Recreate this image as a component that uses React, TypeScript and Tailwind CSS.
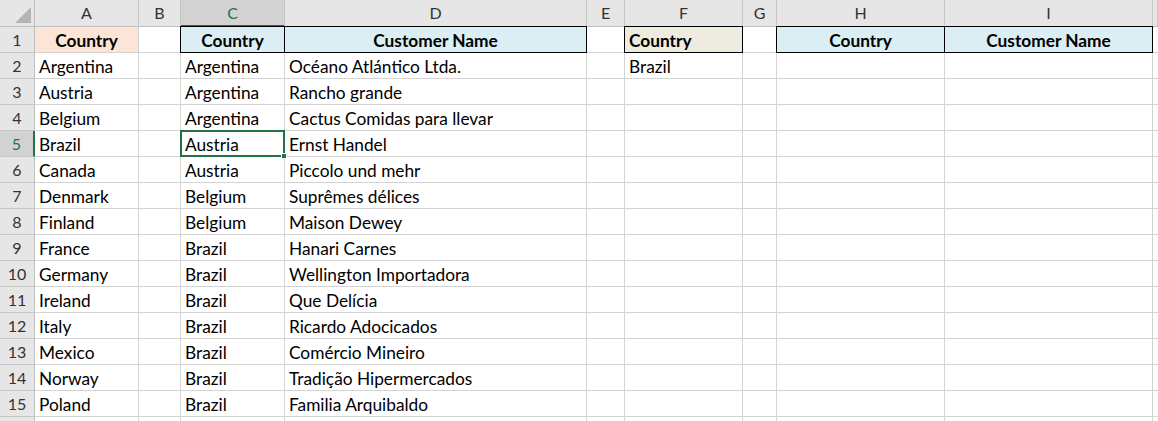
import React from 'react';

type Fill = 'orange' | 'blue' | 'tan' | undefined;

interface Cell {
  text?: string;
  bold?: boolean;
  center?: boolean;
  fill?: Fill;
  boxed?: boolean;
  selected?: boolean;
}

const columns = [
  { key: 'A', width: 104 },
  { key: 'B', width: 42 },
  { key: 'C', width: 104 },
  { key: 'D', width: 302 },
  { key: 'E', width: 38 },
  { key: 'F', width: 118 },
  { key: 'G', width: 34 },
  { key: 'H', width: 168 },
  { key: 'I', width: 208 },
  { key: '', width: 5 },
];

const countries = ['Argentina', 'Austria', 'Belgium', 'Brazil', 'Canada', 'Denmark', 'Finland', 'France', 'Germany', 'Ireland', 'Italy', 'Mexico', 'Norway', 'Poland'];
const custCountry = ['Argentina', 'Argentina', 'Argentina', 'Austria', 'Austria', 'Belgium', 'Belgium', 'Brazil', 'Brazil', 'Brazil', 'Brazil', 'Brazil', 'Brazil', 'Brazil'];
const custName = [
  'Océano Atlántico Ltda.',
  'Rancho grande',
  'Cactus Comidas para llevar',
  'Ernst Handel',
  'Piccolo und mehr',
  'Suprêmes délices',
  'Maison Dewey',
  'Hanari Carnes',
  'Wellington Importadora',
  'Que Delícia',
  'Ricardo Adocicados',
  'Comércio Mineiro',
  'Tradição Hipermercados',
  'Familia Arquibaldo',
];

const fillClass: Record<string, string> = {
  orange: 'bg-[#fce4d6]',
  blue: 'bg-[#daeef3]',
  tan: 'bg-[#eeece1]',
};

function buildRows(): Cell[][] {
  const rows: Cell[][] = [];
  rows.push([
    { text: 'Country', bold: true, center: true, fill: 'orange' },
    {},
    { text: 'Country', bold: true, center: true, fill: 'blue', boxed: true },
    { text: 'Customer Name', bold: true, center: true, fill: 'blue', boxed: true },
    {},
    { text: 'Country', bold: true, fill: 'tan', boxed: true },
    {},
    { text: 'Country', bold: true, center: true, fill: 'blue', boxed: true },
    { text: 'Customer Name', bold: true, center: true, fill: 'blue', boxed: true },
    {},
  ]);
  for (let i = 0; i < 14; i++) {
    rows.push([
      { text: countries[i] },
      {},
      { text: custCountry[i], selected: i === 3 },
      { text: custName[i] },
      {},
      { text: i === 0 ? 'Brazil' : undefined },
      {},
      {},
      {},
      {},
    ]);
  }
  rows.push(columns.map(() => ({})));
  return rows;
}

const App: React.FC = () => {
  const rows = buildRows();
  const gridCols = '35px ' + columns.map((c) => `${c.width}px`).join(' ');

  return (
    <div className="w-[1158px] h-[421px] overflow-hidden bg-white font-['Lato','Liberation_Sans',sans-serif] text-[17.3px] text-black">
      <div className="grid" style={{ gridTemplateColumns: gridCols }}>
        {/* column headers */}
        <div className="relative h-[27px] bg-[#e6e6e6] border-r border-b border-[#bfbfbf]">
          <div className="absolute right-[3px] bottom-[3px] w-0 h-0 border-l-[16px] border-l-transparent border-b-[16px] border-b-[#b5b5b5]" />
        </div>
        {columns.map((c) =>
          c.key === 'C' ? (
            <div key={c.key} className="h-[27px] bg-[#d2d2d2] border-r border-[#c6c6c6] border-b-2 border-b-[#217346] flex items-center justify-center text-[16px] text-[#217346]">
              {c.key}
            </div>
          ) : (
            <div key={c.key || 'J'} className="h-[27px] bg-[#e6e6e6] border-r border-b border-r-[#c6c6c6] border-b-[#bfbfbf] flex items-center justify-center text-[16px] text-[#333]">
              {c.key}
            </div>
          )
        )}

        {rows.map((row, ri) => (
          <React.Fragment key={ri}>
            <div
              className={
                ri === 4
                  ? 'h-[26px] bg-[#d2d2d2] border-b border-[#c6c6c6] border-r-2 border-r-[#217346] flex items-center justify-center text-[16px] text-[#217346]'
                  : 'h-[26px] bg-[#e6e6e6] border-b border-r border-b-[#c6c6c6] border-r-[#bfbfbf] flex items-center justify-center text-[16px] text-[#333]'
              }
            >
              {ri < 15 ? ri + 1 : ''}
            </div>
            {row.map((cell, ci) => (
              <div
                key={ci}
                className={`relative h-[26px] border-r border-b border-[#d4d4d4] flex items-end pb-[1px] px-[4px] leading-[20px] whitespace-nowrap ${
                  cell.fill ? fillClass[cell.fill] : ''
                } ${cell.center ? 'justify-center' : ''} ${cell.bold ? 'font-bold' : ''}`}
              >
                {cell.text}
                {cell.boxed && <span className="absolute -left-px -top-px right-[-1px] bottom-[-1px] border border-black pointer-events-none" />}
                {cell.selected && (
                  <span className="absolute -left-px -top-px right-[-1px] bottom-[-1px] border-2 border-[#217346] pointer-events-none z-10">
                    <span className="absolute right-[-4px] bottom-[-4px] w-[6px] h-[6px] bg-[#217346] border border-white" />
                  </span>
                )}
              </div>
            ))}
          </React.Fragment>
        ))}
      </div>
    </div>
  );
};

export default App;
